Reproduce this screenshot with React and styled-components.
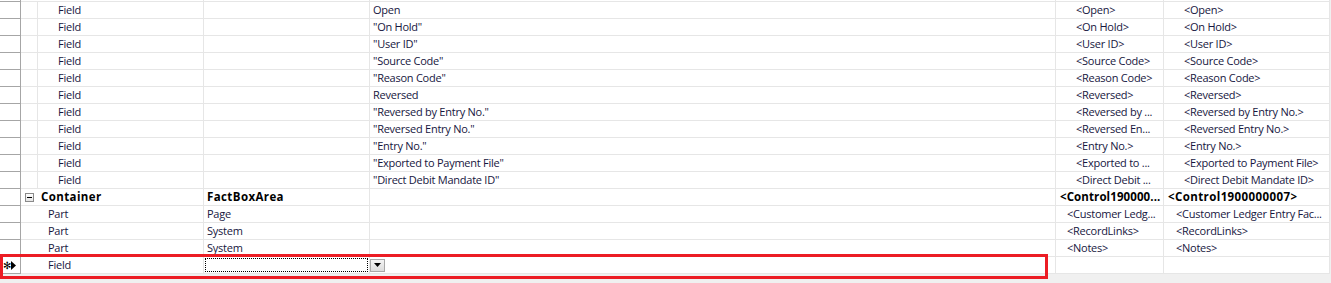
import React from "react";
import styled, { createGlobalStyle, css } from "styled-components";

const GlobalStyle = createGlobalStyle`
  html, body { margin: 0; padding: 0; }
  body {
    background: #f0f0f0;
    font-family: "Segoe UI", "Open Sans", "Noto Sans", sans-serif;
    font-size: 11px;
    letter-spacing: -0.25px;
    color: #14143c;
    -webkit-font-smoothing: antialiased;
  }
`;

const LINE = "#e6e6e6";
const HEAD_LINE = "#a6a6a6";

const Page = styled.div`
  position: relative;
  width: 1331px;
  height: 283px;
  overflow: hidden;
  background: #f0f0f0;
`;

const Grid = styled.div`
  width: 1330px;
  background: #ffffff;
  display: flex;
  flex-direction: column;
`;

const Row = styled.div`
  display: grid;
  grid-template-columns: 21px 183px 166px 686px 108px 166px;
  height: ${(p) => (p.$partial ? "2px" : "17px")};
  ${(p) =>
    p.$bold
      ? css`
          font-weight: 700;
          font-size: 11.5px;
          letter-spacing: 0.4px;
          color: #000;
        `
      : css`
          font-weight: 400;
          color: #16163e;
        `}
`;

const Cell = styled.div`
  box-sizing: border-box;
  border-right: 1px solid ${LINE};
  border-bottom: 1px solid ${LINE};
  display: flex;
  align-items: center;
  padding-left: ${(p) => p.$pad || 3}px;
  white-space: nowrap;
  overflow: hidden;
  line-height: 16px;
  letter-spacing: ${(p) => (p.$tight ? "0.1px" : "inherit")};
`;

const HeadCell = styled.div`
  box-sizing: border-box;
  border-right: 1px solid ${HEAD_LINE};
  border-bottom: 1px solid ${HEAD_LINE};
  background: #fff;
  display: flex;
  align-items: center;
  justify-content: flex-start;
  ${(p) =>
    p.$current &&
    css`
      border: 1px solid ${HEAD_LINE};
      margin-top: -1px;
      height: 18px;
      padding-left: 2px;
    `}
`;

const NameCell = styled(Cell)`
  padding-left: 0;
  align-items: stretch;
`;

const Guide = styled.div`
  width: 16px;
  flex: none;
  border-right: 1px solid ${LINE};
  margin-bottom: -1px;
`;

const NameText = styled.span`
  display: flex;
  align-items: center;
  padding-left: ${(p) => p.$pad}px;
`;

const Toggle = styled.span`
  box-sizing: border-box;
  width: 9px;
  height: 9px;
  margin: auto 7px auto 4px;
  border: 1px solid #8a8a8a;
  background: linear-gradient(#ffffff, #e4e4e4);
  position: relative;
  flex: none;
  &::after {
    content: "";
    position: absolute;
    left: 1px;
    right: 1px;
    top: 3px;
    height: 1px;
    background: #000;
  }
`;

const Marker = styled.span`
  font-size: 10px;
  font-weight: 400;
  color: #000;
  letter-spacing: 0;
  display: flex;
  align-items: center;
`;

const Focus = styled.div`
  box-sizing: border-box;
  width: 163px;
  height: 14px;
  margin-left: 1px;
  border: 1px dotted #000;
`;

const DropButton = styled.div`
  box-sizing: border-box;
  width: 15px;
  height: 13px;
  border: 1px solid #a8a8a8;
  background: linear-gradient(#f4f4f4, #dcdcdc);
  display: flex;
  align-items: center;
  justify-content: center;
`;

const EditorCell = styled(Cell)`
  padding-left: 0;
  overflow: visible;
`;

const Highlight = styled.div`
  position: absolute;
  left: 0;
  top: 254px;
  width: 1048px;
  height: 25px;
  box-sizing: border-box;
  border: 3px solid #ec1c24;
  pointer-events: none;
`;

const fields = [
  ["Open", "<Open>", "<Open>"],
  ['"On Hold"', "<On Hold>", "<On Hold>"],
  ['"User ID"', "<User ID>", "<User ID>"],
  ['"Source Code"', "<Source Code>", "<Source Code>"],
  ['"Reason Code"', "<Reason Code>", "<Reason Code>"],
  ["Reversed", "<Reversed>", "<Reversed>"],
  ['"Reversed by Entry No."', "<Reversed by ...", "<Reversed by Entry No.>"],
  ['"Reversed Entry No."', "<Reversed En...", "<Reversed Entry No.>"],
  ['"Entry No."', "<Entry No.>", "<Entry No.>"],
  ['"Exported to Payment File"', "<Exported to ...", "<Exported to Payment File>"],
  ['"Direct Debit Mandate ID"', "<Direct Debit ...", "<Direct Debit Mandate ID>"],
];

const parts = [
  ["Page", "<Customer Ledg...", "<Customer Ledger Entry Fac..."],
  ["System", "<RecordLinks>", "<RecordLinks>"],
  ["System", "<Notes>", "<Notes>"],
];

function FieldRow({ source, cap1, cap2 }) {
  return (
    <Row>
      <HeadCell />
      <NameCell>
        <Guide />
        <NameText $pad={20}>Field</NameText>
      </NameCell>
      <Cell />
      <Cell>{source}</Cell>
      <Cell $pad={20}>{cap1}</Cell>
      <Cell $pad={20}>{cap2}</Cell>
    </Row>
  );
}

export default function App() {
  return (
    <Page>
      <GlobalStyle />
      <Grid>
        <Row $partial>
          <HeadCell />
          <Cell />
          <Cell />
          <Cell />
          <Cell />
          <Cell />
        </Row>
        {fields.map(([s, a, b], i) => (
          <FieldRow key={i} source={s} cap1={a} cap2={b} />
        ))}
        <Row $bold>
          <HeadCell />
          <NameCell>
            <Toggle />
            <NameText $pad={0}>Container</NameText>
          </NameCell>
          <Cell>FactBoxArea</Cell>
          <Cell />
          <Cell $pad={4} $tight>{"<Control190000..."}</Cell>
          <Cell $pad={4}>{"<Control1900000007>"}</Cell>
        </Row>
        {parts.map(([t, a, b], i) => (
          <Row key={i}>
            <HeadCell />
            <NameCell>
              <NameText $pad={27}>Part</NameText>
            </NameCell>
            <Cell>{t}</Cell>
            <Cell />
            <Cell $pad={11}>{a}</Cell>
            <Cell $pad={12}>{b}</Cell>
          </Row>
        ))}
        <Row>
          <HeadCell $current>
            <Marker>
              <span>✻</span>
              <svg width="5" height="9" viewBox="0 0 5 9">
                <path d="M0 0 L5 4.5 L0 9 Z" fill="#000" />
              </svg>
            </Marker>
          </HeadCell>
          <NameCell>
            <NameText $pad={27}>Field</NameText>
          </NameCell>
          <EditorCell>
            <Focus />
          </EditorCell>
          <EditorCell>
            <DropButton>
              <svg width="7" height="4" viewBox="0 0 7 4">
                <path d="M0 0 H7 L3.5 4 Z" fill="#000" />
              </svg>
            </DropButton>
          </EditorCell>
          <Cell />
          <Cell />
        </Row>
      </Grid>
      <Highlight />
    </Page>
  );
}
